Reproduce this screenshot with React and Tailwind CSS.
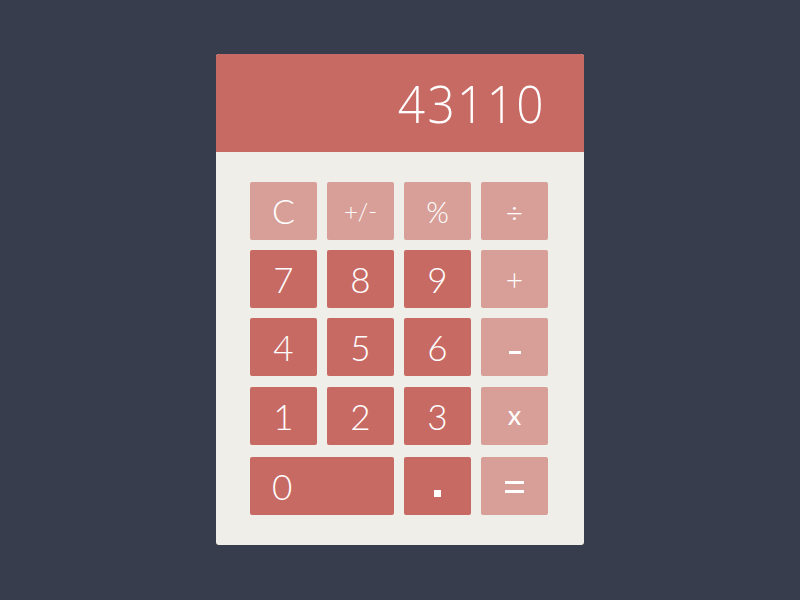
import React from 'react';

const keys = [
  [
    { label: 'C', kind: 'op', size: 'text-[34px]' },
    { label: '+/-', kind: 'op', size: 'text-[24px]' },
    { label: '%', kind: 'op', size: 'text-[29px]' },
    { label: '÷', kind: 'op', size: 'text-[30px]' },
  ],
  [
    { label: '7', kind: 'num' },
    { label: '8', kind: 'num' },
    { label: '9', kind: 'num' },
    { label: '+', kind: 'op', size: 'text-[30px]' },
  ],
  [
    { label: '4', kind: 'num' },
    { label: '5', kind: 'num' },
    { label: '6', kind: 'num' },
    { label: <span className="block w-[12px] h-[3px] bg-white mt-[10px]" />, id: 'minus', kind: 'op' },
  ],
  [
    { label: '1', kind: 'num' },
    { label: '2', kind: 'num' },
    { label: '3', kind: 'num' },
    { label: 'x', kind: 'op', size: 'text-[27px] font-normal pb-[3px]' },
  ],
];

const Key = ({ label, kind, size = 'text-[35px]' }) => (
  <button
    className={`w-full h-[58px] rounded-[2px] flex items-center justify-center text-white font-light leading-none ${size} ${
      kind === 'num' ? 'bg-[#c86a64]' : 'bg-[#d89f99]'
    }`}
  >
    {label}
  </button>
);

export default function App() {
  return (
    <div className="w-[800px] h-[600px] bg-[#373d4c] flex justify-center pt-[54px] font-['Lato','Open_Sans',sans-serif]">
      <div className="w-[368px] h-[491px] bg-[#efeee8] rounded-[3px] overflow-hidden flex flex-col">
        {/* display */}
        <div className="h-[98px] bg-[#c86a64] flex items-center justify-end pr-[38px]">
          <span className="text-white text-[52px] font-light tracking-[2.5px] leading-none font-['Open_Sans',sans-serif] scale-x-[0.92] origin-right">
            43110
          </span>
        </div>

        {/* keypad */}
        <div className="pl-[34px] pr-[36px] pt-[30px]">
          <div className="grid grid-cols-4 gap-x-[10px]">
            {keys.map((row, r) => (
              <React.Fragment key={r}>
                {row.map((k) => (
                  <div key={k.id || k.label} className={r === 0 ? '' : r === 3 ? 'mt-[11px]' : 'mt-[10px]'}>
                    <Key {...k} />
                  </div>
                ))}
              </React.Fragment>
            ))}
            <div className="col-span-2 mt-[12px]">
              <button className="w-full h-[58px] rounded-[2px] bg-[#c86a64] text-white text-[35px] font-light leading-none flex items-center pl-[22px]">
                0
              </button>
            </div>
            <div className="mt-[12px]">
              <button className="w-full h-[58px] rounded-[2px] bg-[#c86a64] flex items-end justify-center pb-[18px]">
                <span className="w-[7px] h-[7px] bg-white" />
              </button>
            </div>
            <div className="mt-[12px]">
              <button className="w-full h-[58px] rounded-[2px] bg-[#d89f99] flex flex-col items-center justify-center gap-[6px] pt-[1px]">
                <span className="block w-[19px] h-[3px] bg-white" />
                <span className="block w-[19px] h-[3px] bg-white" />
              </button>
            </div>
          </div>
        </div>
      </div>
    </div>
  );
}
